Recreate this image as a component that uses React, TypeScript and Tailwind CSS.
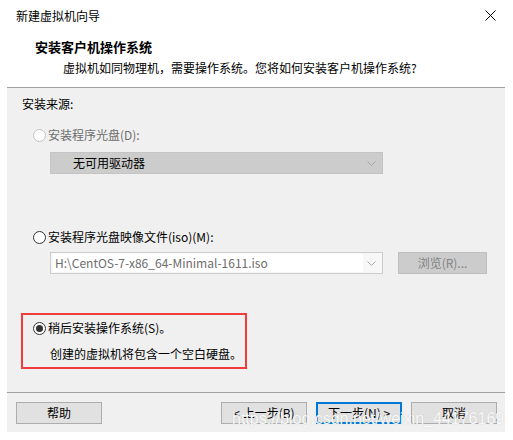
import React from 'react'

const font = { fontFamily: '"Noto Sans CJK SC", "Microsoft YaHei", sans-serif' }

const Radio = ({ checked = false, disabled = false }: { checked?: boolean; disabled?: boolean }) => (
  <span
    className={`flex h-[13px] w-[13px] shrink-0 items-center justify-center rounded-full border bg-white ${
      disabled ? 'border-[#c4c4c4]' : 'border-[#333333]'
    }`}
  >
    {checked && <span className="h-[7px] w-[7px] rounded-full bg-[#333333]" />}
  </span>
)

const Chevron = () => (
  <svg width="9" height="5" viewBox="0 0 9 5" className="shrink-0">
    <path d="M0.5 0.5 L4.5 4.5 L8.5 0.5" fill="none" stroke="#a8a8a8" strokeWidth="1" />
  </svg>
)

const WizardButton = ({ label, primary = false }: { label: string; primary?: boolean }) => (
  <button
    className={`flex h-[22px] w-[86px] items-center justify-center bg-[#e1e1e1] text-[12px] leading-none text-black ${
      primary ? 'border-2 border-[#0078d7]' : 'border border-[#adadad]'
    }`}
  >
    {label}
  </button>
)

export default function App() {
  return (
    <div className="relative h-[440px] w-[513px] bg-white text-[12px] leading-[16px] text-black" style={font}>
      <div className="ml-[7px] flex h-[432px] w-[498px] flex-col">
        {/* header */}
        <div className="relative h-[88px] border-b border-[#a0a0a0] bg-white pl-[9px] pt-[8px]">
          <div>新建虚拟机向导</div>
          <svg width="11" height="11" viewBox="0 0 11 11" className="absolute right-[9px] top-[10px]">
            <path d="M0.5 0.5 L10.5 10.5 M10.5 0.5 L0.5 10.5" stroke="#000" strokeWidth="1" />
          </svg>
          <div className="mt-[15px] pl-[19px] text-[13px] font-bold">安装客户机操作系统</div>
          <div className="mt-[5px] pl-[47px]">虚拟机如同物理机，需要操作系统。您将如何安装客户机操作系统?</div>
        </div>

        {/* body */}
        <div className="flex h-[304px] flex-col bg-[#f0f0f0] pl-[15px] pt-[8px]">
          <div>安装来源:</div>

          <div className="ml-[11px] mt-[15px] flex items-center gap-[2px] text-[#6d6d6d]">
            <Radio disabled />
            <span>安装程序光盘(D):</span>
          </div>
          <div className="ml-[28px] mt-[9px] flex h-[22px] w-[333px] items-center justify-between border border-[#c4c4c4] bg-[#cccccc] pl-[22px] pr-[6px]">
            <span>无可用驱动器</span>
            <Chevron />
          </div>

          <div className="ml-[11px] mt-[55px] flex items-center gap-[2px]">
            <Radio />
            <span>安装程序光盘映像文件(iso)(M):</span>
          </div>
          <div className="ml-[28px] mt-[7px] flex items-center gap-[15px]">
            <div className="flex h-[22px] w-[333px] items-center justify-between border border-[#cccccc] bg-[#f7f7f7] pl-[2px] pr-[6px]">
              <span className="flex h-[18px] w-[310px] items-center bg-white pl-[2px] text-[#6d6d6d]">
                H:\CentOS-7-x86_64-Minimal-1611.iso
              </span>
              <Chevron />
            </div>
            <div className="flex h-[22px] w-[89px] items-center justify-center border border-[#bfbfbf] bg-[#cccccc] text-[#838383]">
              浏览(R)...
            </div>
          </div>

          <div className="ml-[-1px] mt-[39px] w-[226px] border-2 border-[#f03c3c] pb-[5px] pl-[10px] pt-[5px]">
            <div className="flex items-center gap-[2px]">
              <Radio checked />
              <span>稍后安装操作系统(S)。</span>
            </div>
            <div className="mt-[10px] pl-[17px]">创建的虚拟机将包含一个空白硬盘。</div>
          </div>
        </div>

        {/* footer */}
        <div className="flex h-[40px] items-start justify-between border-t border-[#a0a0a0] bg-[#f0f0f0] pl-[9px] pr-[8px] pt-[9px]">
          <WizardButton label="帮助" />
          <div className="flex gap-[9px]">
            <WizardButton label="< 上一步(B)" />
            <WizardButton label="下一步(N) >" primary />
            <WizardButton label="取消" />
          </div>
        </div>
      </div>

      {/* watermark */}
      <div
        className="pointer-events-none absolute left-[232px] top-[409px] whitespace-nowrap text-[16px] leading-[20px] text-white/90"
        style={{ fontFamily: '"Liberation Sans", Arial, sans-serif', textShadow: '0 0 1px rgba(150,150,150,0.5)' }}
      >
        https://blog.csdn.net/weixin_44176169
      </div>
    </div>
  )
}
